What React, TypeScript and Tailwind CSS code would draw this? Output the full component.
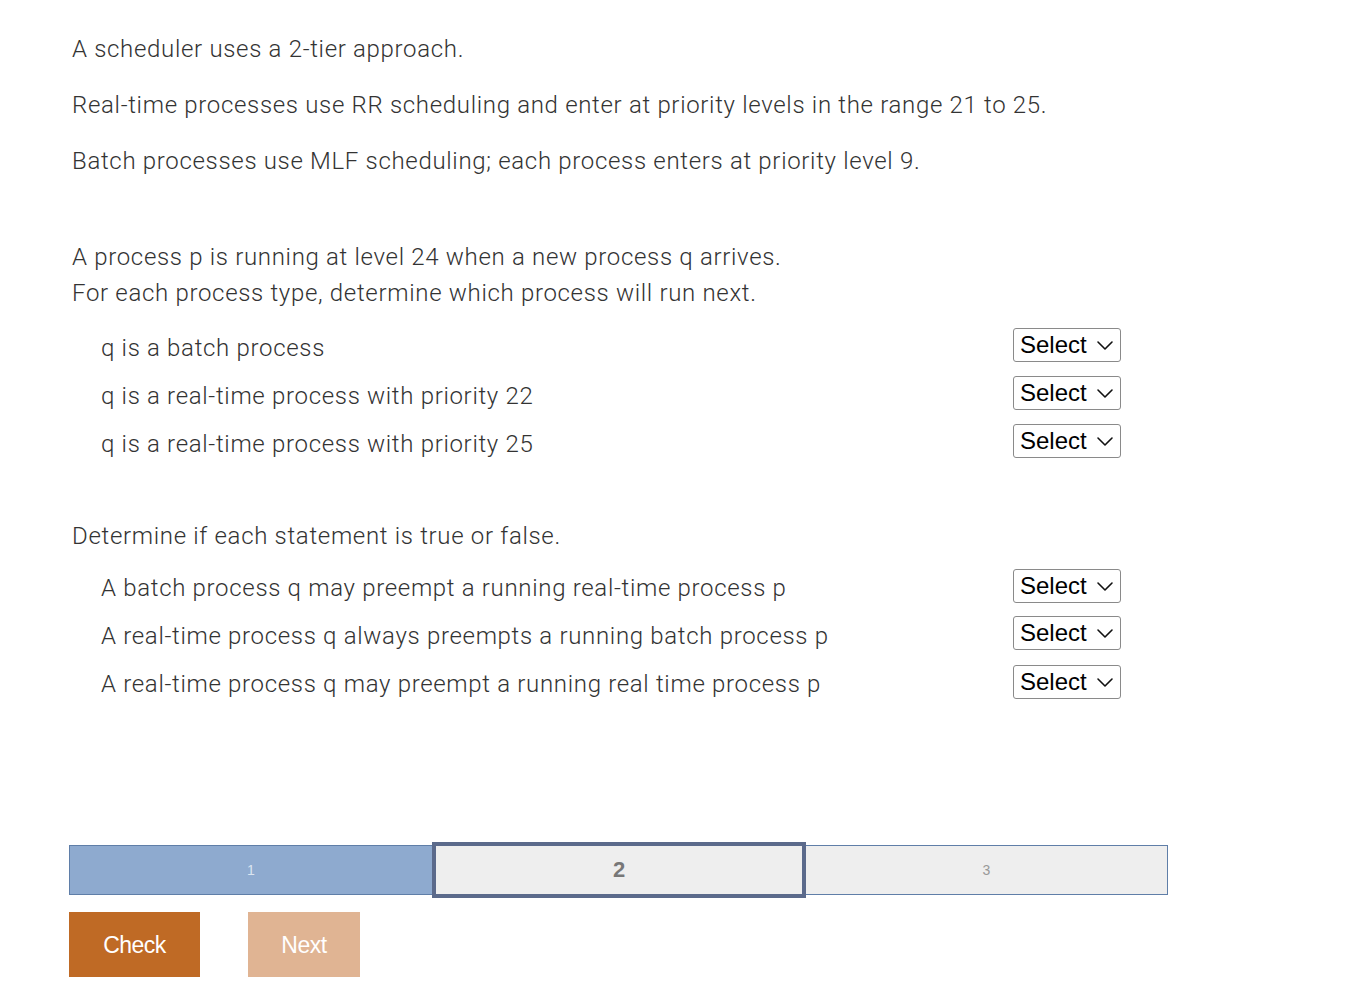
import React from "react";

function SelectBox() {
  return (
    <div className="flex h-[34px] w-[108px] items-center rounded-[3px] border border-[#8a8a8a] bg-white pl-[6px] pr-[6px] text-[24px] tracking-normal text-black" style={{ fontFamily: '"Liberation Sans", Arial, sans-serif' }}>
      <span className="leading-none">Select</span>
      <svg className="ml-auto" width="18" height="18" viewBox="0 0 18 18" fill="none">
        <path d="M2 6l7 7 7-7" stroke="#111" strokeWidth="1.6" strokeLinecap="round" strokeLinejoin="round" />
      </svg>
    </div>
  );
}

function Row({ text, off = 6 }: { text: string; off?: number }) {
  return (
    <div className="flex h-[48px] w-[1020px] items-center justify-between">
      <span>{text}</span>
      <div className={off === 4 ? "-mt-[4px]" : "-mt-[6px]"}>
        <SelectBox />
      </div>
    </div>
  );
}

export default function App() {
  return (
    <div className="min-h-screen bg-white text-[24px] leading-[36px] tracking-[0.68px] text-[#333] font-light" style={{ fontFamily: 'Roboto, "Noto Sans", sans-serif' }}>
      <div className="pl-[72px] pt-[31px]">
        <p>A scheduler uses a 2-tier approach.</p>
        <p className="mt-[20px]">Real-time processes use RR scheduling and enter at priority levels in the range 21 to 25.</p>
        <p className="mt-[20px]">Batch processes use MLF scheduling; each process enters at priority level 9.</p>

        <p className="mt-[60px]">A process p is running at level 24 when a new process q arrives.</p>
        <p>For each process type, determine which process will run next.</p>
        <div className="mt-[13px] pl-[29px]">
          <Row text="q is a batch process" />
          <Row text="q is a real-time process with priority 22" />
          <Row text="q is a real-time process with priority 25" />
        </div>

        <p className="mt-[50px]">Determine if each statement is true or false.</p>
        <div className="mt-[10px] pl-[29px]">
          <Row text="A batch process q may preempt a running real-time process p" off={4} />
          <Row text="A real-time process q always preempts a running batch process p" />
          <Row text="A real-time process q may preempt a running real time process p" off={4} />
        </div>
      </div>

      <div className="pl-[69px] pt-[134px] tracking-normal" style={{ fontFamily: '"Liberation Sans", Arial, sans-serif' }}>
        <div className="flex items-center">
          <div className="flex h-[50px] w-[363px] items-center justify-center border border-r-0 border-[#5f7ea8] bg-[#8eaacf] text-[14px] font-normal text-[#dbe5f1]">1</div>
          <div className="flex h-[56px] w-[374px] items-center justify-center border-4 border-[#5b6a8b] bg-[#eeeeee] text-[22px] font-bold text-[#777]">2</div>
          <div className="flex h-[50px] w-[362px] items-center justify-center border border-l-0 border-[#5f7ea8] bg-[#eeeeee] text-[14px] font-normal text-[#999]">3</div>
        </div>
        <div className="mt-[14px] flex gap-[48px]">
          <button className="flex h-[65px] w-[131px] items-center justify-center bg-[#bf6a25] text-[23px] font-normal text-white tracking-[-0.5px]">Check</button>
          <button className="flex h-[65px] w-[112px] items-center justify-center bg-[#e0b493] text-[23px] font-normal text-white tracking-[-0.5px]">Next</button>
        </div>
      </div>
    </div>
  );
}
